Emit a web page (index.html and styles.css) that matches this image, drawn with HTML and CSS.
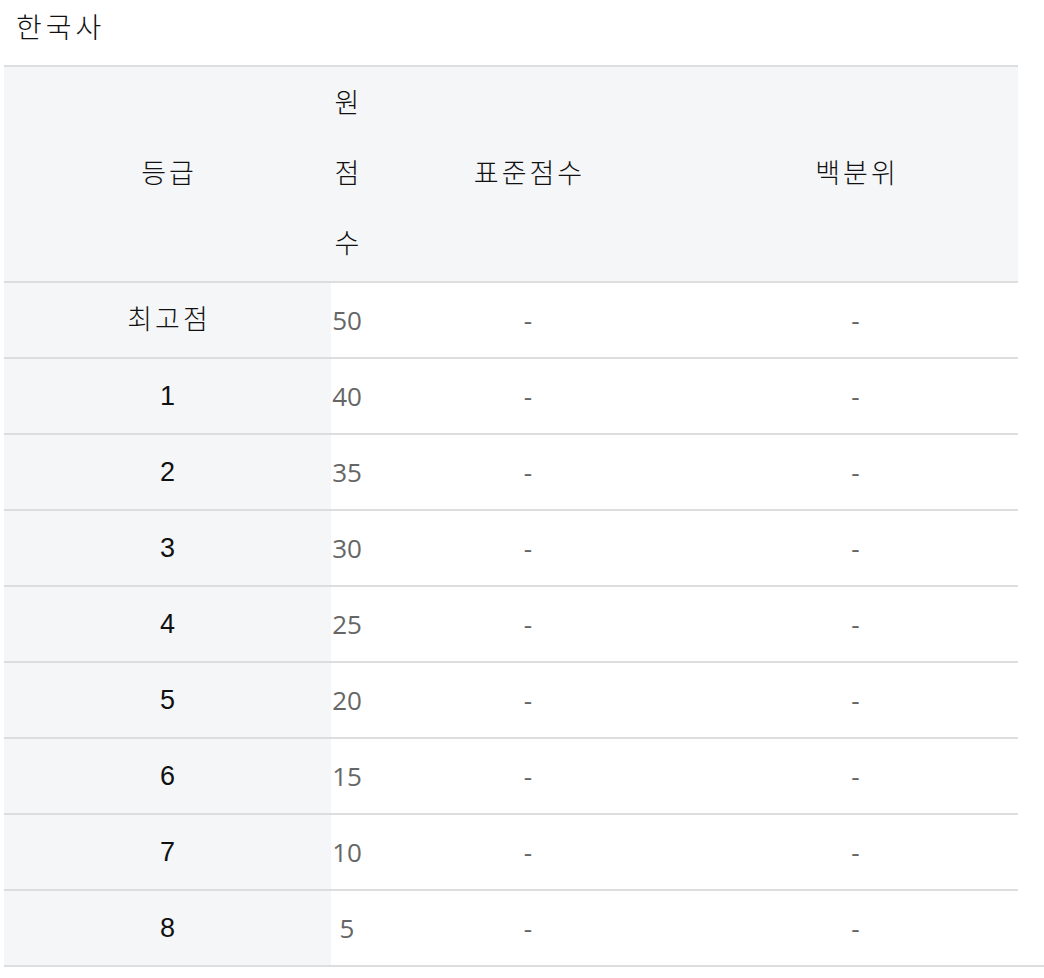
FILE: index.html
```html
<!DOCTYPE html>
<html lang="ko">
<head>
<meta charset="utf-8">
<title>한국사</title>
<link rel="stylesheet" href="styles.css">
</head>
<body>
<h2 class="title">한국사</h2>
<div class="table-wrap">
  <table class="grade-table">
    <colgroup>
      <col class="c-grade">
      <col class="c-raw">
      <col class="c-std">
      <col class="c-pct">
    </colgroup>
    <thead>
      <tr>
        <th class="ko">등급</th>
        <th class="narrow">원점수</th>
        <th class="ko">표준점수</th>
        <th class="ko">백분위</th>
      </tr>
    </thead>
    <tbody>
      <tr><td class="grade ko">최고점</td><td class="num">50</td><td class="num">-</td><td class="num">-</td></tr>
      <tr><td class="grade">1</td><td class="num">40</td><td class="num">-</td><td class="num">-</td></tr>
      <tr><td class="grade">2</td><td class="num">35</td><td class="num">-</td><td class="num">-</td></tr>
      <tr><td class="grade">3</td><td class="num">30</td><td class="num">-</td><td class="num">-</td></tr>
      <tr><td class="grade">4</td><td class="num">25</td><td class="num">-</td><td class="num">-</td></tr>
      <tr><td class="grade">5</td><td class="num">20</td><td class="num">-</td><td class="num">-</td></tr>
      <tr><td class="grade">6</td><td class="num">15</td><td class="num">-</td><td class="num">-</td></tr>
      <tr><td class="grade">7</td><td class="num">10</td><td class="num">-</td><td class="num">-</td></tr>
      <tr><td class="grade">8</td><td class="num">5</td><td class="num">-</td><td class="num">-</td></tr>
    </tbody>
  </table>
</div>
</body>
</html>
```

FILE: styles.css
```css
html, body {
  margin: 0;
  padding: 0;
  background: #ffffff;
}

body {
  font-family: "Liberation Sans", "Noto Sans CJK KR", sans-serif;
  color: #111111;
}

.title {
  margin: 0 0 17px 0;
  padding: 10px 0 0 16px;
  font-size: 28px;
  line-height: 38px;
  font-weight: 300;
  letter-spacing: 4px;
}

.table-wrap {
  margin-left: 4px;
  border-bottom: 2px solid #dddddd;
}

.grade-table {
  width: 1014px;
  table-layout: fixed;
  border-collapse: separate;
  border-spacing: 0;
  border-top: 2px solid #dddddd;
  font-size: 27px;
}

.c-grade { width: 327px; }
.c-raw { width: 32px; }
.c-std { width: 330px; }
.c-pct { width: 325px; }

.grade-table th {
  background: #f5f6f8;
  font-weight: 300;
  padding: 2px 0;
  line-height: 70px;
  text-align: center;
  border-bottom: 2px solid #dddddd;
  color: #111111;
}

.grade-table td {
  padding: 2px 0;
  line-height: 70px;
  text-align: center;
  border-bottom: 2px solid #dddddd;
}

.grade-table .ko {
  font-weight: 300;
  letter-spacing: 3px;
  text-indent: 3px;
}

.grade-table tbody tr:last-child td {
  border-bottom: none;
}

.grade-table td.grade {
  background: #f5f6f8;
  color: #111111;
}

.grade-table td.num {
  font-family: "Open Sans", "Noto Sans CJK KR", sans-serif;
  font-size: 26px;
  color: #666666;
}
```
